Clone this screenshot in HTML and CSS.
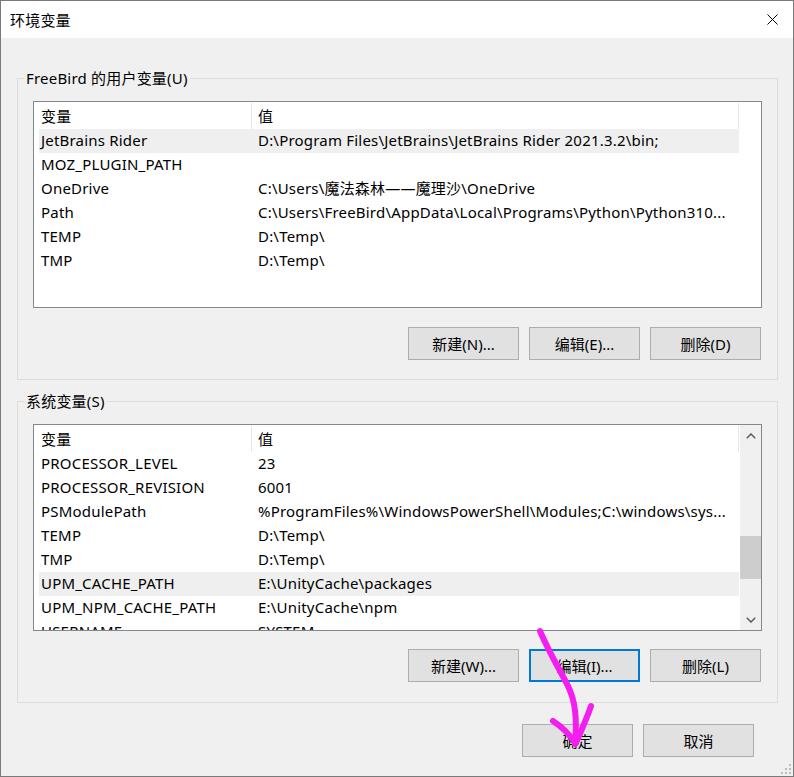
FILE: index.html
```html
<!DOCTYPE html>
<html lang="zh-CN">
<head>
<meta charset="utf-8">
<title>环境变量</title>
<link rel="stylesheet" href="styles.css">
</head>
<body>
<div class="window">
  <div class="titlebar">
    <span class="title">环境变量</span>
    <button class="close" aria-label="关闭">
      <svg width="11" height="11" viewBox="0 0 11 11"><path d="M0.5 0.5 L10.5 10.5 M10.5 0.5 L0.5 10.5" stroke="#000" stroke-width="1" fill="none"/></svg>
    </button>
  </div>
  <div class="content">
    <fieldset class="group">
      <legend>FreeBird 的用户变量(U)</legend>
      <div class="list">
        <div class="rows">
          <div class="row head"><span class="c1">变量</span><span class="c2">值</span></div>
          <div class="row sel"><span class="c1">JetBrains Rider</span><span class="c2">D:\Program Files\JetBrains\JetBrains Rider 2021.3.2\bin;</span></div>
          <div class="row"><span class="c1">MOZ_PLUGIN_PATH</span><span class="c2"></span></div>
          <div class="row"><span class="c1">OneDrive</span><span class="c2">C:\Users\魔法森林——魔理沙\OneDrive</span></div>
          <div class="row"><span class="c1">Path</span><span class="c2">C:\Users\FreeBird\AppData\Local\Programs\Python\Python310...</span></div>
          <div class="row"><span class="c1">TEMP</span><span class="c2">D:\Temp\</span></div>
          <div class="row"><span class="c1">TMP</span><span class="c2">D:\Temp\</span></div>
        </div>
      </div>
      <div class="btns">
        <button class="btn">新建(N)...</button>
        <button class="btn">编辑(E)...</button>
        <button class="btn">删除(D)</button>
      </div>
    </fieldset>

    <fieldset class="group">
      <legend>系统变量(S)</legend>
      <div class="list">
        <div class="rows">
          <div class="row head"><span class="c1">变量</span><span class="c2">值</span></div>
          <div class="row"><span class="c1">PROCESSOR_LEVEL</span><span class="c2">23</span></div>
          <div class="row"><span class="c1">PROCESSOR_REVISION</span><span class="c2">6001</span></div>
          <div class="row"><span class="c1">PSModulePath</span><span class="c2">%ProgramFiles%\WindowsPowerShell\Modules;C:\windows\sys...</span></div>
          <div class="row"><span class="c1">TEMP</span><span class="c2">D:\Temp\</span></div>
          <div class="row"><span class="c1">TMP</span><span class="c2">D:\Temp\</span></div>
          <div class="row sel"><span class="c1">UPM_CACHE_PATH</span><span class="c2">E:\UnityCache\packages</span></div>
          <div class="row"><span class="c1">UPM_NPM_CACHE_PATH</span><span class="c2">E:\UnityCache\npm</span></div>
          <div class="row"><span class="c1">USERNAME</span><span class="c2">SYSTEM</span></div>
        </div>
        <div class="vscroll">
          <div class="sb-arrow">
            <svg width="10" height="6" viewBox="0 0 10 6"><path d="M0.8 5.2 L5 1 L9.2 5.2" stroke="#606060" stroke-width="1.6" fill="none"/></svg>
          </div>
          <div class="sb-track"><div class="sb-thumb"></div></div>
          <div class="sb-arrow">
            <svg width="10" height="6" viewBox="0 0 10 6"><path d="M0.8 0.8 L5 5 L9.2 0.8" stroke="#606060" stroke-width="1.6" fill="none"/></svg>
          </div>
        </div>
      </div>
      <div class="btns">
        <button class="btn">新建(W)...</button>
        <button class="btn focus">编辑(I)...</button>
        <button class="btn">删除(L)</button>
      </div>
    </fieldset>

    <div class="footer">
      <button class="btn">确定</button>
      <button class="btn">取消</button>
    </div>
  </div>

  <svg class="grip" width="12" height="12" viewBox="0 0 12 12">
    <rect x="10" y="2" width="2" height="2"/>
    <rect x="6" y="6" width="2" height="2"/>
    <rect x="10" y="6" width="2" height="2"/>
    <rect x="2" y="10" width="2" height="2"/>
    <rect x="6" y="10" width="2" height="2"/>
    <rect x="10" y="10" width="2" height="2"/>
  </svg>

  <svg class="annot" width="794" height="777" viewBox="0 0 794 777">
    <g stroke="#f41ef0" stroke-width="6" stroke-linecap="round" stroke-linejoin="round" fill="none">
      <path d="M540 631 C547 648 558 667 567 684 C576 701 577 720 575 744"/>
      <path d="M591 706 C587 718 581 731 576 743"/>
      <path d="M553 721 C562 727 570 735 575 743"/>
    </g>
  </svg>
</div>
</body>
</html>
```

FILE: styles.css
```css
html, body {
  margin: 0;
  padding: 0;
  background: #fff;
}

.window {
  position: relative;
  width: 794px;
  height: 777px;
  box-sizing: border-box;
  border: 1px solid #7a7a7a;
  background: #f0f0f0;
  display: flex;
  flex-direction: column;
  font-family: "Noto Sans", "Noto Sans CJK SC", sans-serif;
  font-size: 15px;
  letter-spacing: 0.2px;
  color: #000;
  overflow: hidden;
}

.titlebar {
  height: 37px;
  flex: none;
  background: #fff;
  display: flex;
  align-items: center;
  justify-content: space-between;
}

.title {
  padding-left: 9px;
  line-height: 20px;
}

.close {
  width: 41px;
  height: 37px;
  padding: 0;
  border: 0;
  background: transparent;
  display: flex;
  align-items: center;
  justify-content: center;
}

.content {
  display: flex;
  flex-direction: column;
  padding: 30px 15px 0 16px;
}

.group {
  margin: 0;
  min-width: 0;
  border: 1px solid #dcdcdc;
  padding: 12px 15px 19px 15px;
}

.group + .group {
  margin-top: 11px;
  padding-bottom: 20px;
}

.group legend {
  padding: 0 2px;
  margin-left: -9px;
  line-height: 21px;
}

.list {
  height: 207px;
  box-sizing: border-box;
  border: 1px solid #828790;
  background: #fff;
  display: flex;
  overflow: hidden;
}

.rows {
  flex: none;
  width: 700px;
  padding-left: 5px;
}

.row {
  display: grid;
  grid-template-columns: 213px 487px;
  height: 24px;
  line-height: 22px;
  white-space: nowrap;
}

.row span {
  overflow: hidden;
  box-sizing: border-box;
}

.c1 {
  padding-left: 2px;
}

.c2 {
  padding-left: 6px;
}

.row.head {
  height: 27px;
}

.row.head span {
  margin-top: 1px;
  padding-top: 2px;
  border-right: 1px solid #e5e5e5;
}

.row.sel {
  background: #efefef;
}

.vscroll {
  flex: none;
  width: 21px;
  margin-left: 1px;
  background: #f0f0f0;
  display: flex;
  flex-direction: column;
}

.sb-arrow {
  height: 21px;
  flex: none;
  display: flex;
  align-items: center;
  justify-content: center;
}

.sb-track {
  flex: 1;
}

.sb-thumb {
  margin-top: 90px;
  height: 43px;
  background: #cdcdcd;
}

.btns {
  display: flex;
  justify-content: flex-end;
  gap: 10px;
  margin-top: 19px;
  padding-right: 1px;
}

.group + .group .btns {
  margin-top: 18px;
}

.btn {
  width: 111px;
  height: 33px;
  box-sizing: border-box;
  padding: 0;
  background: #e1e1e1;
  border: 1px solid #adadad;
  font: inherit;
  color: #000;
}

.btn.focus {
  border: 2px solid #0078d7;
}

.footer {
  display: flex;
  justify-content: flex-end;
  gap: 10px;
  margin-top: 21px;
  padding-right: 24px;
}

.grip {
  position: absolute;
  right: 2px;
  bottom: 2px;
  fill: #bcbcbc;
}

.annot {
  position: absolute;
  left: -1px;
  top: -1px;
  pointer-events: none;
}
```
